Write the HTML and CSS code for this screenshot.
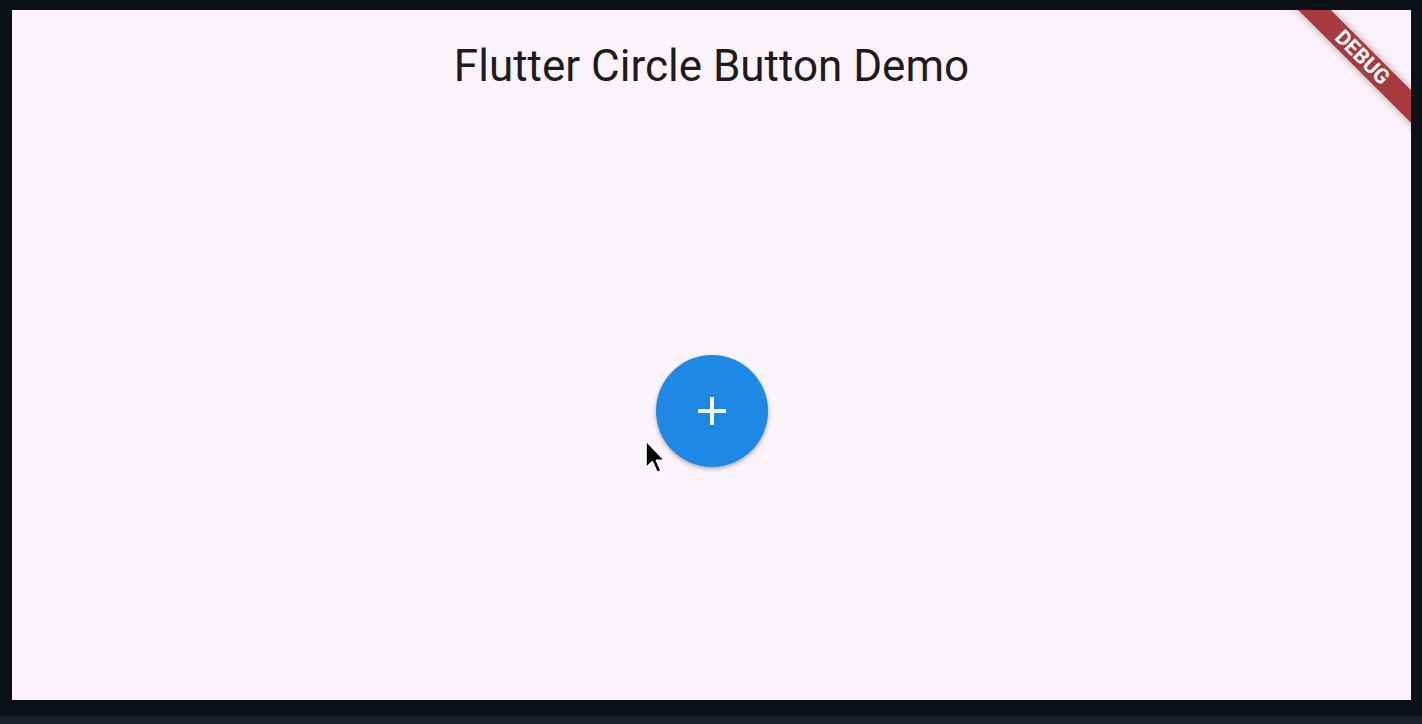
FILE: index.html
```html
<!DOCTYPE html>
<html lang="en">
<head>
  <meta charset="UTF-8">
  <meta name="viewport" content="width=device-width, initial-scale=1.0">
  <title>Flutter Circle Button Demo</title>
  <link rel="stylesheet" href="styles.css">
</head>
<body>
  <div class="window">
    <div class="app">
      <header class="app-bar">
        <h1>Flutter Circle Button Demo</h1>
      </header>
      <main class="content">
        <button class="circle-button" aria-label="Add">
          <svg width="48" height="48" viewBox="0 0 24 24">
            <path d="M19 13h-6v6h-2v-6H5v-2h6V5h2v6h6v2z" fill="#fff"/>
          </svg>
        </button>
      </main>
      <div class="debug-banner"><span>DEBUG</span></div>
      <svg class="cursor" width="22" height="36" viewBox="0 0 12 19">
        <path d="M0.5 0.5 L0.5 15.5 L4 12.2 L6.6 18 L8.8 17 L6.3 11.4 L10.8 11.4 Z" fill="#000" stroke="#fff" stroke-width="1" stroke-linejoin="round"/>
      </svg>
    </div>
  </div>
  <div class="taskbar"></div>
</body>
</html>
```

FILE: styles.css
```css
html, body {
  margin: 0;
  height: 100%;
}

body {
  background: #0b1117;
  display: flex;
  flex-direction: column;
  font-family: Roboto, 'Noto Sans', sans-serif;
  overflow: hidden;
}

.window {
  padding: 10px 11px 0 12px;
  height: 706px;
  box-sizing: border-box;
}

.app {
  position: relative;
  overflow: hidden;
  background: #fbf3fa;
  height: 690px;
  display: flex;
  flex-direction: column;
}

.app-bar {
  height: 112px;
  display: flex;
  align-items: center;
  justify-content: center;
}

.app-bar h1 {
  margin: 0;
  font-size: 44px;
  font-weight: 400;
  color: #1d1b20;
}

.content {
  flex: 1;
  display: flex;
  align-items: center;
  justify-content: center;
}

.circle-button {
  width: 112px;
  height: 112px;
  border: none;
  border-radius: 50%;
  background: #1e88e5;
  box-shadow: 0 2px 4px rgba(0, 0, 0, 0.3);
  display: flex;
  align-items: center;
  justify-content: center;
  padding: 0;
  cursor: pointer;
}

.debug-banner {
  position: absolute;
  top: 36px;
  right: -101px;
  width: 300px;
  height: 23px;
  background: #a63a3e;
  transform: rotate(45deg);
  box-shadow: 0 0 8px rgba(60, 0, 40, 0.35);
  display: flex;
  align-items: center;
  justify-content: center;
}

.debug-banner span {
  color: #fff;
  font-size: 21px;
  font-weight: 700;
  line-height: 1;
}

.cursor {
  position: absolute;
  left: 633px;
  top: 429px;
}

.taskbar {
  height: 8px;
  margin-top: 10px;
  background: #1c2129;
}
```
